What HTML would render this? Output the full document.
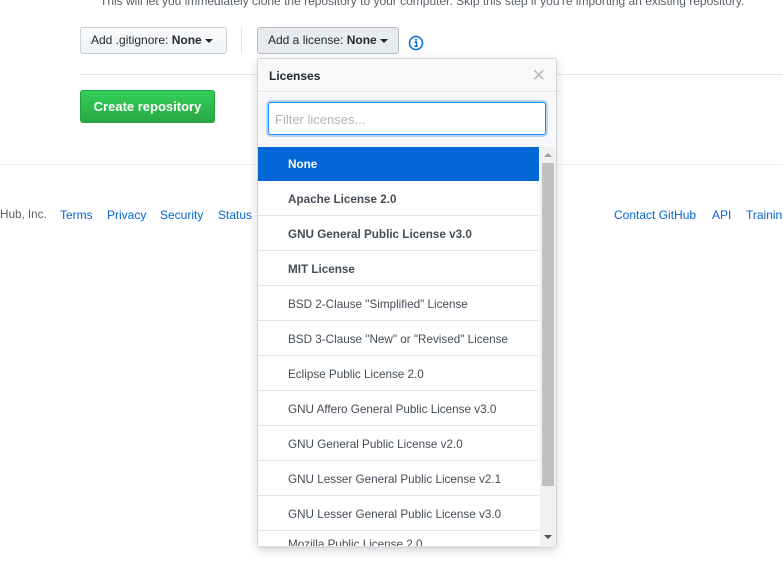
<!DOCTYPE html>
<html><head><style>
body{margin:0;width:783px;height:567px;overflow:hidden;background:#fff;font-family:"Liberation Sans",sans-serif;font-size:12px;color:#24292e;position:relative}
.a{position:absolute}
.btn{position:absolute;top:27px;height:25px;border:1px solid #cdd0d4;border-radius:3px;background:linear-gradient(#fafbfc,#eff3f6);line-height:25px;padding:0 10px;box-sizing:content-box;color:#24292e;font-size:12px;white-space:nowrap}
.btn b{font-weight:bold}
.car{display:inline-block;width:0;height:0;border-left:4px solid transparent;border-right:4px solid transparent;border-top:4px solid #24292e;vertical-align:middle;margin-left:3px}
.f{position:absolute;top:208px;color:#0366d6;font-size:12px}
.it{position:absolute;left:0;width:281px;height:34px;border-bottom:1px solid #e1e4e8;line-height:35px;padding-left:30px;box-sizing:border-box;font-size:11.7px;color:#444d56;white-space:nowrap;overflow:hidden}
</style></head><body>
<div class="a" style="left:100px;top:-6px;color:#586069;font-size:12px">This will let you immediately clone the repository to your computer. Skip this step if you're importing an existing repository.</div>
<div class="btn" style="left:80px;width:125px">Add .gitignore: <b>None</b><span class="car"></span></div>
<div class="a" style="left:241px;top:27px;width:1px;height:27px;background:#e1e4e8"></div>
<div class="btn" style="left:257px;width:120px;background:#e9ecef;border-color:#b5b9bd">Add a license: <b>None</b><span class="car"></span></div>
<svg class="a" style="left:408px;top:35px" width="16" height="16" viewBox="0 0 16 16"><circle cx="8" cy="8" r="6.5" fill="none" stroke="#0366d6" stroke-width="1.5"/><circle cx="8" cy="4.8" r="1" fill="#0366d6"/><path d="M6.5 7h2v4.3M6.3 11.3h3.4" stroke="#0366d6" stroke-width="1.4" fill="none"/></svg>
<div class="a" style="left:80px;top:74px;width:703px;height:1px;background:#e1e4e8"></div>
<div class="a" style="left:80px;top:90px;width:133px;height:31px;border:1px solid #25a241;border-radius:3px;background:linear-gradient(#34d058,#28a745);color:#fff;font-weight:bold;font-size:13px;line-height:32px;text-align:center">Create repository</div>
<div class="a" style="left:0;top:164px;width:783px;height:1px;background:#eaecef"></div>
<div class="f" style="left:0;color:#586069;font-size:11.7px">Hub, Inc.</div>
<div class="f" style="left:60px">Terms</div>
<div class="f" style="left:107px">Privacy</div>
<div class="f" style="left:160px">Security</div>
<div class="f" style="left:218px">Status</div>
<div class="f" style="left:614px">Contact GitHub</div>
<div class="f" style="left:712px">API</div>
<div class="f" style="left:746px">Training</div>
<div class="a" style="left:257px;top:58px;width:298px;height:488px;border:1px solid #d1d5da;border-radius:3px;background:#fff;box-shadow:0 3px 10px rgba(0,0,0,.15);overflow:hidden">
 <div class="a" style="left:0;top:0;width:298px;height:33px;background:#f6f8fa;border-bottom:1px solid #e1e4e8;line-height:34px;padding-left:11px;box-sizing:border-box;font-weight:bold;color:#24292e;font-size:12px">Licenses<span style="position:absolute;right:10px;top:0;color:#bbb;font-size:17px;font-weight:normal">✕</span></div>
 <div class="a" style="left:0;top:34px;width:298px;height:54px;background:#f6f8fa;border-bottom:1px solid #e1e4e8"></div>
 <div class="a" style="left:10px;top:43px;width:278px;height:33px;border:1px solid #2188ff;border-radius:3px;background:#fff;box-shadow:0 0 0 2px rgba(3,102,214,.25);line-height:33px;padding-left:6px;box-sizing:border-box;color:#b0b5ba;font-size:13px">Filter licenses...</div>
 <div class="a" style="left:0;top:88px;width:298px;height:400px">
  <div class="it" style="top:0;background:#0366d6;color:#fff;font-weight:bold;border-color:#0366d6">None</div>
  <div class="it" style="top:35px;font-weight:bold;color:#444d56">Apache License 2.0</div>
  <div class="it" style="top:70px;font-weight:bold;color:#444d56">GNU General Public License v3.0</div>
  <div class="it" style="top:105px;font-weight:bold;color:#444d56">MIT License</div>
  <div class="it" style="top:140px">BSD 2-Clause "Simplified" License</div>
  <div class="it" style="top:175px">BSD 3-Clause "New" or "Revised" License</div>
  <div class="it" style="top:210px">Eclipse Public License 2.0</div>
  <div class="it" style="top:245px">GNU Affero General Public License v3.0</div>
  <div class="it" style="top:280px">GNU General Public License v2.0</div>
  <div class="it" style="top:315px">GNU Lesser General Public License v2.1</div>
  <div class="it" style="top:350px">GNU Lesser General Public License v3.0</div>
  <div class="it" style="top:385px;height:15px;line-height:12px;padding-top:7px">Mozilla Public License 2.0</div>
  <div class="a" style="left:282px;top:0;width:16px;height:400px;background:#f1f1f1"></div>
  <div class="a" style="left:284px;top:16px;width:12px;height:323px;background:#c1c1c1"></div>
  <div class="a" style="left:286px;top:6px;width:0;height:0;border-left:4px solid transparent;border-right:4px solid transparent;border-bottom:4px solid #a3a3a3"></div>
  <div class="a" style="left:286px;top:388px;width:0;height:0;border-left:4px solid transparent;border-right:4px solid transparent;border-top:4px solid #505050"></div>
 </div>
</div>
</body></html>
